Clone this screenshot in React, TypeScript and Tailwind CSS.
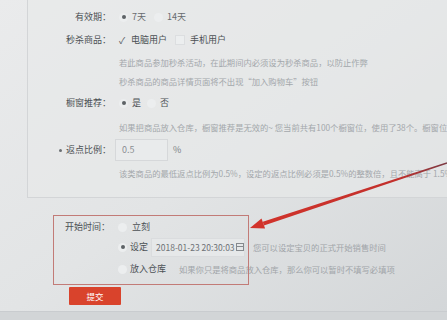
import React from 'react';

const font = { fontFamily: '"Noto Sans CJK SC", "Noto Sans", sans-serif' };

const Radio: React.FC<{ checked?: boolean }> = ({ checked }) => (
  <span className="w-[9px] h-[9px] rounded-full bg-[#eceeef] flex items-center justify-center shrink-0">
    {checked && <span className="w-[4px] h-[4px] rounded-full bg-[#5e6266]" />}
  </span>
);

const Label: React.FC<{ children: React.ReactNode; star?: boolean }> = ({ children, star }) => (
  <div className="w-[114px] shrink-0 flex justify-end items-center pr-[4px] text-[9px] text-[#4c5155]">
    {star && <span className="w-[3px] h-[3px] rounded-full bg-[#6b6f73] mr-[4px]" />}
    {children}
  </div>
);

const Help: React.FC<{ children: React.ReactNode; className?: string }> = ({ children, className = '' }) => (
  <div className={`h-[18px] flex items-center pl-[118px] text-[8.3px] text-[#a3a7ab] whitespace-nowrap ${className}`}>
    {children}
  </div>
);

const App: React.FC = () => {
  return (
    <div
      className="relative w-[447px] h-[320px] overflow-hidden bg-linear-to-br from-[#eaebec] via-[#e2e4e5] to-[#d3d6d8]"
      style={font}
    >
      {/* upper form panel */}
      <div className="ml-[27px] h-[198px] border-l border-b border-[#d3d5d7] bg-[#e7e9ea]/60 pt-[6px]">
        <div className="-ml-[27px] flex flex-col">
          <div className="h-[22px] flex items-center">
            <Label>有效期：</Label>
            <div className="flex items-center gap-[4px] text-[9px] text-[#676b6f] pl-[4px]">
              <Radio checked />
              <span>7天</span>
              <span className="ml-[4px]"><Radio /></span>
              <span>14天</span>
            </div>
          </div>
          <div className="h-[22px] mt-[1px] flex items-center">
            <Label>秒杀商品：</Label>
            <div className="flex items-center text-[9px] text-[#4c5155] pl-[2px]">
              <span className="w-[10px] h-[10px] flex items-center justify-center text-[#55595d] text-[9px] leading-none">✓</span>
              <span className="ml-[4px]">电脑用户</span>
              <span className="ml-[8px] w-[10px] h-[10px] bg-[#eceeef] border border-[#dcdee0]" />
              <span className="ml-[5px]">手机用户</span>
            </div>
          </div>
          <Help className="mt-[2px]">若此商品参加秒杀活动，在此期间内必须设为秒杀商品，以防止作弊</Help>
          <Help className="mt-[1px]">秒杀商品的商品详情页面将不出现“加入购物车”按钮</Help>
          <div className="h-[22px] mt-[2px] flex items-center">
            <Label>橱窗推荐：</Label>
            <div className="flex items-center gap-[4px] text-[9px] text-[#4c5155] pl-[4px]">
              <Radio checked />
              <span>是</span>
              <span className="ml-[2px]"><Radio /></span>
              <span>否</span>
            </div>
          </div>
          <Help className="mt-[4px]">如果把商品放入仓库，橱窗推荐是无效的~ 您当前共有100个橱窗位，使用了38个。橱窗位是</Help>
          <div className="h-[22px] mt-[3px] flex items-center">
            <Label star>返点比例：</Label>
            <div className="flex items-center">
              <div className="w-[53px] h-[22px] border border-[#d6d8da] bg-[#e9ebec] flex items-center pl-[6px] text-[9px] text-[#8a8e92]">
                0.5
              </div>
              <span className="ml-[5px] text-[9px] text-[#7b7f83]">%</span>
            </div>
          </div>
          <Help className="mt-[3px]">该类商品的最低返点比例为0.5%，设定的返点比例必须是0.5%的整数倍，且不能高于 1.5%</Help>
        </div>
      </div>

      {/* start time section */}
      <div className="mt-[20px] flex flex-col">
        <div className="h-[18px] flex items-center">
          <Label>开始时间：</Label>
          <div className="flex items-center gap-[5px] text-[9px] text-[#4c5155] pl-[4px]">
            <Radio />
            <span>立刻</span>
          </div>
        </div>
        <div className="h-[20px] mt-[1px] flex items-center">
          <div className="w-[114px] shrink-0" />
          <div className="flex items-center text-[9px] text-[#4c5155] pl-[4px]">
            <Radio checked />
            <span className="ml-[3px]">设定</span>
            <div className="ml-[3px] w-[94px] h-[19px] border border-[#dadcde] bg-[#e6e8e9] flex items-center pl-[4px] text-[8.5px] text-[#6d7175] whitespace-nowrap">
              2018-01-23 20:30:03
              <span className="ml-[1px] w-[8px] h-[8px] border border-[#85898d] bg-[#e6e8e9] relative">
                <span className="absolute left-0 right-0 top-[2px] h-px bg-[#85898d]" />
              </span>
            </div>
            <span className="ml-[8px] text-[8.3px] text-[#a1a5a9] whitespace-nowrap">您可以设定宝贝的正式开始销售时间</span>
          </div>
        </div>
        <div className="h-[18px] mt-[3px] flex items-center">
          <div className="w-[114px] shrink-0" />
          <div className="flex items-center text-[9px] text-[#4c5155] pl-[4px] whitespace-nowrap">
            <Radio />
            <span className="ml-[3px]">放入仓库</span>
            <span className="ml-[13px] text-[8.3px] text-[#a1a5a9]">如果你只是将商品放入仓库，那么你可以暂时不填写必填项</span>
          </div>
        </div>
        <div className="mt-[9px] ml-[69px]">
          <button className="w-[52px] h-[18px] bg-[#d9432c] text-white text-[8.5px] flex items-center justify-center rounded-[1px]">
            提交
          </button>
        </div>
      </div>

      {/* bottom stripe */}
      <div className="absolute left-0 right-0 bottom-0 h-[9px] bg-[#d2d5d7] border-t border-[#c9cccf]" />

      {/* red highlight annotation */}
      <div className="absolute left-[53px] top-[215px] w-[196px] h-[70px] border border-[#c27b77]" />

      {/* red arrow annotation */}
      <svg className="absolute left-0 top-0" width="447" height="320" viewBox="0 0 447 320">
        <defs>
          <linearGradient id="ar" x1="447" y1="163" x2="250" y2="228" gradientUnits="userSpaceOnUse">
            <stop offset="0" stopColor="#7a3a44" />
            <stop offset="0.25" stopColor="#c2302c" />
            <stop offset="1" stopColor="#d2332b" />
          </linearGradient>
        </defs>
        <polygon points="447.2,163.8 446.8,162.2 262.8,221.7 263.9,225.4" fill="url(#ar)" />
        <polygon points="250,228 261.5,218.6 265.1,228.6" fill="#d2332b" />
      </svg>
    </div>
  );
};

export default App;
